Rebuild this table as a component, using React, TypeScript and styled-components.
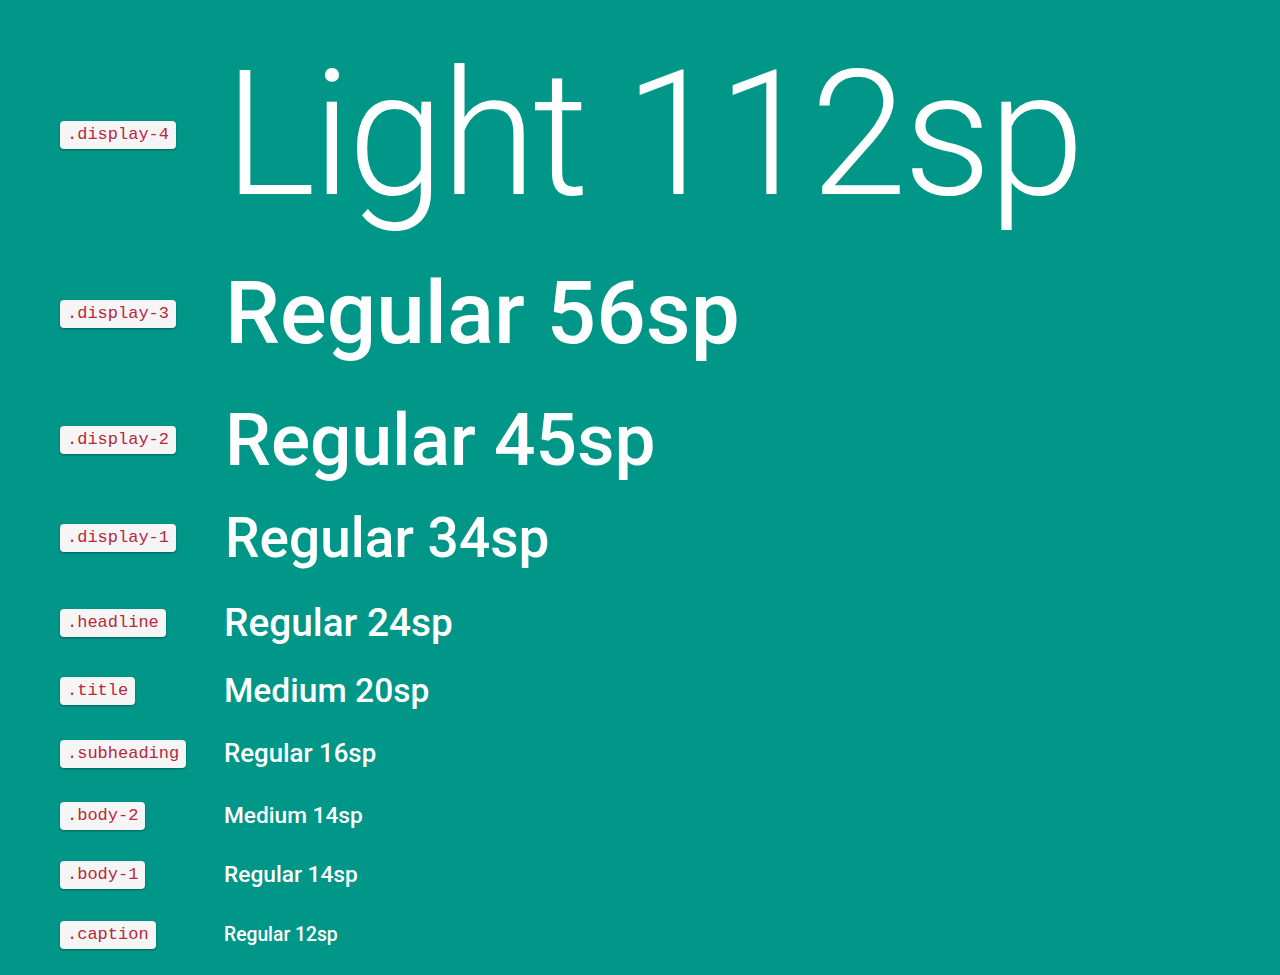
import React from "react";
import styled, { createGlobalStyle } from "styled-components";

const Global = createGlobalStyle`
  html, body { margin: 0; padding: 0; background: #009688; }
  body { font-family: Roboto, "Noto Sans", sans-serif; color: #fff; }
`;

const Page = styled.div`
  min-height: 975px;
  box-sizing: border-box;
  padding: 45px 0 0 60px;
  display: flex;
  flex-direction: column;
`;

const Row = styled.div<{ $h: number; $mt: number }>`
  display: flex;
  align-items: center;
  height: ${(p) => p.$h}px;
  margin-top: ${(p) => p.$mt}px;
`;

const LabelCol = styled.div`
  width: 165px;
  flex: none;
  display: flex;
  align-items: center;
`;

const Code = styled.code`
  display: inline-block;
  font-family: "Liberation Mono", "DejaVu Sans Mono", monospace;
  font-size: 17px;
  line-height: 28px;
  height: 28px;
  padding: 0 7px;
  color: #b8283c;
  background: #f5f5f5;
  border-radius: 4px;
  box-shadow: 0 1px 2px rgba(0, 0, 0, 0.35);
`;

const Sample = styled.div<{ $size: number; $weight: number; $ls: number; $shift: number }>`
  font-family: Roboto, "Noto Sans", sans-serif;
  font-size: ${(p) => p.$size}px;
  font-weight: ${(p) => p.$weight};
  letter-spacing: ${(p) => p.$ls}px;
  margin-left: ${(p) => p.$shift}px;
  line-height: 1;
  white-space: nowrap;
  color: #fff;
`;

const rows = [
  { cls: ".display-4", text: "Light 112sp", size: 174, weight: 300, ls: -3.5, shift: -1, h: 180, mt: 0 },
  { cls: ".display-3", text: "Regular 56sp", size: 87.3, weight: 500, ls: 0, shift: 0, h: 100, mt: 39 },
  { cls: ".display-2", text: "Regular 45sp", size: 73, weight: 500, ls: 0, shift: 0, h: 80, mt: 36 },
  { cls: ".display-1", text: "Regular 34sp", size: 55, weight: 500, ls: 0, shift: 0, h: 60, mt: 28 },
  { cls: ".headline", text: "Regular 24sp", size: 38.8, weight: 500, ls: 0, shift: -1, h: 40, mt: 35 },
  { cls: ".title", text: "Medium 20sp", size: 33.6, weight: 500, ls: 0, shift: -1, h: 36, mt: 30 },
  { cls: ".subheading", text: "Regular 16sp", size: 25.8, weight: 500, ls: 0, shift: -1, h: 30, mt: 30 },
  { cls: ".body-2", text: "Medium 14sp", size: 22.7, weight: 500, ls: 0, shift: -1, h: 30, mt: 32 },
  { cls: ".body-1", text: "Regular 14sp", size: 22.7, weight: 500, ls: 0, shift: -1, h: 30, mt: 29 },
  { cls: ".caption", text: "Regular 12sp", size: 19.3, weight: 500, ls: 0, shift: -1, h: 30, mt: 30 },
];

export default function App() {
  return (
    <>
      <Global />
      <Page>
        {rows.map((r) => (
          <Row key={r.cls} $h={r.h} $mt={r.mt}>
            <LabelCol>
              <Code>{r.cls}</Code>
            </LabelCol>
            <Sample $size={r.size} $weight={r.weight} $ls={r.ls} $shift={r.shift}>
              {r.text}
            </Sample>
          </Row>
        ))}
      </Page>
    </>
  );
}
